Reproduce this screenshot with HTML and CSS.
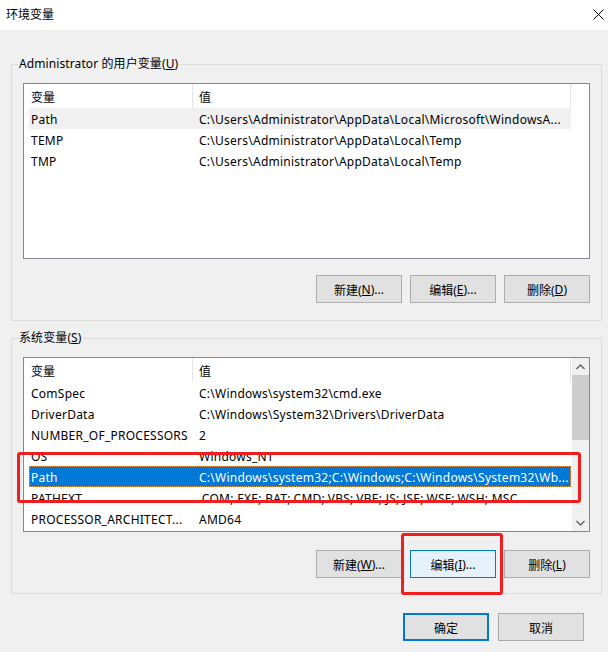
FILE: index.html
```html
<!DOCTYPE html>
<html lang="zh-CN">
<head>
<meta charset="utf-8">
<title>环境变量</title>
<link rel="stylesheet" href="styles.css">
</head>
<body>
<div class="titlebar">
  <span class="title">环境变量</span>
  <svg class="close" width="11" height="11" viewBox="0 0 11 11"><path d="M0.5 0.5L10.5 10.5M10.5 0.5L0.5 10.5" stroke="#000" stroke-width="1" fill="none"/></svg>
</div>

<section class="group user">
  <span class="legend">Administrator 的用户变量(<u>U</u>)</span>
  <div class="list">
    <div class="cols">
      <div class="header"><div class="h1">变量</div><div class="h2">值</div></div>
      <div class="row hover"><div class="c1">Path</div><div class="c2">C:\Users\Administrator\AppData\Local\Microsoft\WindowsA...</div></div>
      <div class="row"><div class="c1">TEMP</div><div class="c2">C:\Users\Administrator\AppData\Local\Temp</div></div>
      <div class="row"><div class="c1">TMP</div><div class="c2">C:\Users\Administrator\AppData\Local\Temp</div></div>
    </div>
  </div>
  <div class="btns">
    <div class="btn">新建(<u>N</u>)...</div>
    <div class="btn">编辑(<u>E</u>)...</div>
    <div class="btn">删除(<u>D</u>)</div>
  </div>
</section>

<section class="group sys">
  <span class="legend">系统变量(<u>S</u>)</span>
  <div class="list">
    <div class="cols">
      <div class="header"><div class="h1">变量</div><div class="h2">值</div></div>
      <div class="row"><div class="c1">ComSpec</div><div class="c2">C:\Windows\system32\cmd.exe</div></div>
      <div class="row"><div class="c1">DriverData</div><div class="c2">C:\Windows\System32\Drivers\DriverData</div></div>
      <div class="row"><div class="c1">NUMBER_OF_PROCESSORS</div><div class="c2">2</div></div>
      <div class="row"><div class="c1">OS</div><div class="c2">Windows_NT</div></div>
      <div class="row sel"><div class="c1">Path</div><div class="c2">C:\Windows\system32;C:\Windows;C:\Windows\System32\Wb...</div></div>
      <div class="row"><div class="c1">PATHEXT</div><div class="c2">.COM;.EXE;.BAT;.CMD;.VBS;.VBE;.JS;.JSE;.WSF;.WSH;.MSC</div></div>
      <div class="row"><div class="c1">PROCESSOR_ARCHITECT...</div><div class="c2">AMD64</div></div>
    </div>
    <div class="vscroll">
      <div class="arrow"><svg width="9" height="6" viewBox="0 0 9 6"><path d="M0.5 5L4.5 1L8.5 5" stroke="#606060" stroke-width="1.3" fill="none"/></svg></div>
      <div class="thumb"></div>
      <div class="track"></div>
      <div class="arrow"><svg width="9" height="6" viewBox="0 0 9 6"><path d="M0.5 1L4.5 5L8.5 1" stroke="#606060" stroke-width="1.3" fill="none"/></svg></div>
    </div>
  </div>
  <div class="btns">
    <div class="btn">新建(<u>W</u>)...</div>
    <div class="btn hot">编辑(<u>I</u>)...</div>
    <div class="btn">删除(<u>L</u>)</div>
  </div>
</section>

<div class="footer">
  <div class="btn default">确定</div>
  <div class="btn">取消</div>
</div>

<div class="mark m1"></div>
<div class="mark m2"></div>
</body>
</html>
```

FILE: styles.css
```css
* { box-sizing: border-box; }

body {
  margin: 0;
  width: 608px;
  height: 652px;
  background: #f0f0f0;
  color: #000;
  font-family: "Noto Sans", "Noto Sans CJK SC", sans-serif;
  font-size: 12px;
  position: relative;
  overflow: hidden;
}

u { text-decoration: underline; text-underline-offset: 1px; }

.titlebar {
  height: 30px;
  background: #fff;
  display: flex;
  align-items: center;
  justify-content: space-between;
  padding: 0 4px 2px 6px;
}

.group {
  position: relative;
  margin-left: 11px;
  width: 591px;
  border: 1px solid #dcdcdc;
  padding: 18px 11px 17px;
}
.group.user { margin-top: 34px; }
.group.sys { margin-top: 17px; padding-bottom: 15px; }

.legend {
  position: absolute;
  top: -9px;
  left: 6px;
  padding: 0 1px;
  line-height: 16px;
  background: #f0f0f0;
  letter-spacing: 0.1px;
}

.list {
  display: flex;
  height: 176px;
  border: 1px solid #828790;
  background: #fff;
}
.sys .list { height: 175px; }

.cols { flex: 1; }

.header { display: flex; height: 24px; }
.header .h1,
.header .h2 {
  display: flex;
  align-items: center;
  padding-top: 2px;
  border-right: 1px solid #e5e5e5;
}
.header .h1 { width: 169px; padding-left: 7px; }
.header .h2 { width: 378px; padding-left: 6px; }

.row {
  display: flex;
  align-items: center;
  height: 21px;
  width: 542px;
  margin-left: 5px;
  padding-top: 2px;
  letter-spacing: 0.25px;
}
.row .c1 { width: 164px; padding-left: 2px; white-space: nowrap; overflow: hidden; }
.row .c2 { flex: 1; padding-left: 6px; white-space: nowrap; overflow: hidden; }
.row.hover { background: #f0f0f0; }
.row.sel {
  background: #0078d7;
  color: #fff;
  outline: 1px dotted #f0a050;
  outline-offset: -1px;
}

.vscroll {
  width: 17px;
  display: flex;
  flex-direction: column;
  background: #f0f0f0;
}
.arrow {
  height: 17px;
  display: flex;
  align-items: center;
  justify-content: center;
}
.thumb { height: 65px; background: #cdcdcd; }
.track { flex: 1; }

.btns {
  display: flex;
  justify-content: flex-end;
  gap: 8px;
  margin-top: 16px;
}
.sys .btns { margin-top: 18px; }

.btn {
  width: 86px;
  height: 28px;
  display: flex;
  align-items: center;
  justify-content: center;
  padding-top: 1px;
  border: 1px solid #adadad;
  background: #e1e1e1;
}
.btn.hot { background: #e5f1fb; border-color: #0078d7; }
.btn.default { border: 2px solid #0078d7; }

.footer {
  display: flex;
  justify-content: flex-end;
  gap: 9px;
  margin-top: 19px;
  padding-right: 24px;
}

.mark {
  position: absolute;
  border: 3px solid #f01e1e;
  border-radius: 3px;
}
.m1 { left: 17px; top: 452px; width: 564px; height: 51px; }
.m2 { left: 401px; top: 533px; width: 102px; height: 62px; }
```
